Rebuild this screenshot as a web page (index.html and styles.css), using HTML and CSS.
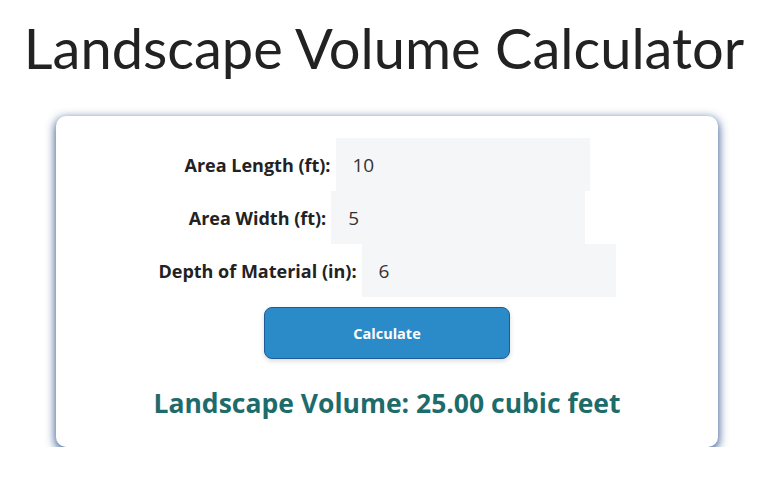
FILE: index.html
```html
<!DOCTYPE html>
<html lang="en">
<head>
    <meta charset="UTF-8">
    <meta name="viewport" content="width=device-width, initial-scale=1.0">
    <title>Landscape Volume Calculator</title>
    <link rel="stylesheet" href="styles.css">
</head>
<body>
    <h1>Landscape Volume Calculator</h1>

    <div class="calculator">
        <div class="row">
            <label for="length">Area Length (ft):</label>
            <input type="number" id="length" value="10">
        </div>
        <div class="row">
            <label for="width">Area Width (ft):</label>
            <input type="number" id="width" value="5">
        </div>
        <div class="row">
            <label for="depth">Depth of Material (in):</label>
            <input type="number" id="depth" value="6">
        </div>
        <div class="row">
            <button class="btn" onclick="calculate()">Calculate</button>
        </div>
        <div class="result" id="result">Landscape Volume: 25.00 cubic feet</div>
    </div>

    <script>
        function calculate() {
            const length = parseFloat(document.getElementById('length').value) || 0;
            const width = parseFloat(document.getElementById('width').value) || 0;
            const depth = parseFloat(document.getElementById('depth').value) || 0;

            // depth is in inches, convert to feet
            const volume = length * width * (depth / 12);
            document.getElementById('result').textContent =
                'Landscape Volume: ' + volume.toFixed(2) + ' cubic feet';
        }
    </script>
</body>
</html>
```

FILE: styles.css
```css
* {
    margin: 0;
    padding: 0;
    box-sizing: border-box;
}

body {
    font-family: 'Open Sans', sans-serif;
    background: #fff;
    color: #222;
}

h1 {
    text-align: center;
    font-family: Lato, 'Open Sans', sans-serif;
    font-weight: 400;
    font-size: 56px;
    line-height: 1;
    color: #222;
    padding-top: 20px;
    margin-bottom: 40px;
}

.calculator {
    width: 662px;
    margin: 0 auto 0 56px;
    background: #fff;
    border-radius: 10px;
    box-shadow: 0 3px 10px 1px rgba(30, 70, 130, 0.85);
    padding: 22px 20px 26px;
}

.row {
    display: flex;
    justify-content: center;
    align-items: center;
    gap: 5px;
}

.row label {
    font-weight: 700;
    font-size: 18px;
    color: #222;
}

.row input {
    width: 254px;
    height: 53px;
    border: none;
    background: #f5f6f8;
    padding-left: 17px;
    font-family: inherit;
    font-size: 19px;
    color: #333;
}

.btn {
    margin-top: 10px;
    width: 246px;
    height: 52px;
    background: #2b8bc9;
    color: #fff;
    border: 1.5px solid #1d5c97;
    border-radius: 8px;
    font-family: inherit;
    font-weight: 700;
    font-size: 14.5px;
    cursor: pointer;
    box-shadow: 0 2px 5px rgba(0, 0, 0, 0.15);
}

.result {
    margin-top: 26px;
    text-align: center;
    font-weight: 700;
    font-size: 26.5px;
    color: #1d6b6b;
}
```
